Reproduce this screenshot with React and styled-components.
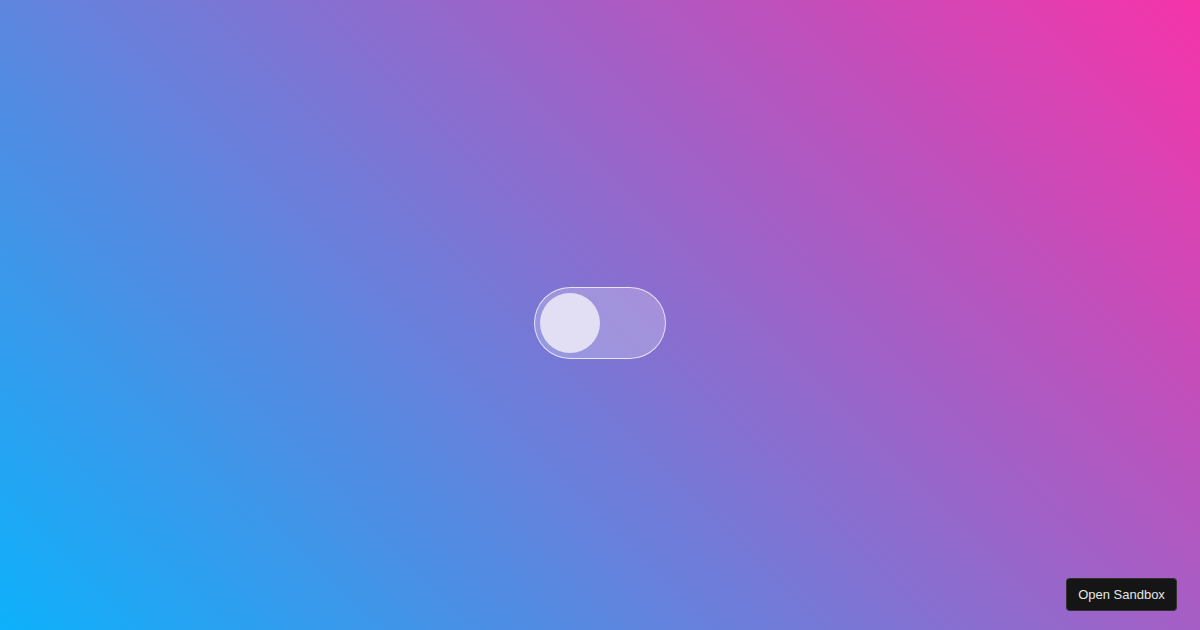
import React, { useState } from "react";
import styled, { createGlobalStyle } from "styled-components";

const GlobalStyle = createGlobalStyle`
  html, body, #root {
    margin: 0;
    padding: 0;
    width: 100%;
    height: 100%;
  }
  * {
    box-sizing: border-box;
  }
`;

const Page = styled.main`
  position: relative;
  width: 100vw;
  height: 100vh;
  display: flex;
  align-items: center;
  justify-content: center;
  background: linear-gradient(45deg, #0db1fb 0%, #f633a9 100%);
  font-family: Inter, "Liberation Sans", sans-serif;
`;

const Track = styled.button`
  display: flex;
  align-items: center;
  justify-content: ${({ $on }) => ($on ? "flex-end" : "flex-start")};
  width: 132px;
  height: 72px;
  padding: 0 5px;
  margin: 0;
  margin-top: 15px;
  border: 1px solid rgba(255, 255, 255, 0.75);
  border-radius: 36px;
  background-color: rgba(255, 255, 255, 0.24);
  cursor: pointer;
`;

const Knob = styled.span`
  display: block;
  width: 60px;
  height: 60px;
  border-radius: 50%;
  background-color: #e2dff5;
`;

const SandboxButton = styled.button`
  position: absolute;
  right: 23px;
  bottom: 19px;
  width: 111px;
  height: 33px;
  padding: 0;
  border: 1px solid rgba(255, 255, 255, 0.12);
  border-radius: 4px;
  background-color: #151515;
  color: #e6e6e6;
  font-family: "Liberation Sans", Arial, sans-serif;
  font-size: 13px;
  cursor: pointer;
`;

const App = () => {
  const [isOn, setIsOn] = useState(false);

  return (
    <>
      <GlobalStyle />
      <Page>
        <Track $on={isOn} onClick={() => setIsOn(!isOn)} aria-label="toggle">
          <Knob />
        </Track>
        <SandboxButton>Open Sandbox</SandboxButton>
      </Page>
    </>
  );
};

export default App;
